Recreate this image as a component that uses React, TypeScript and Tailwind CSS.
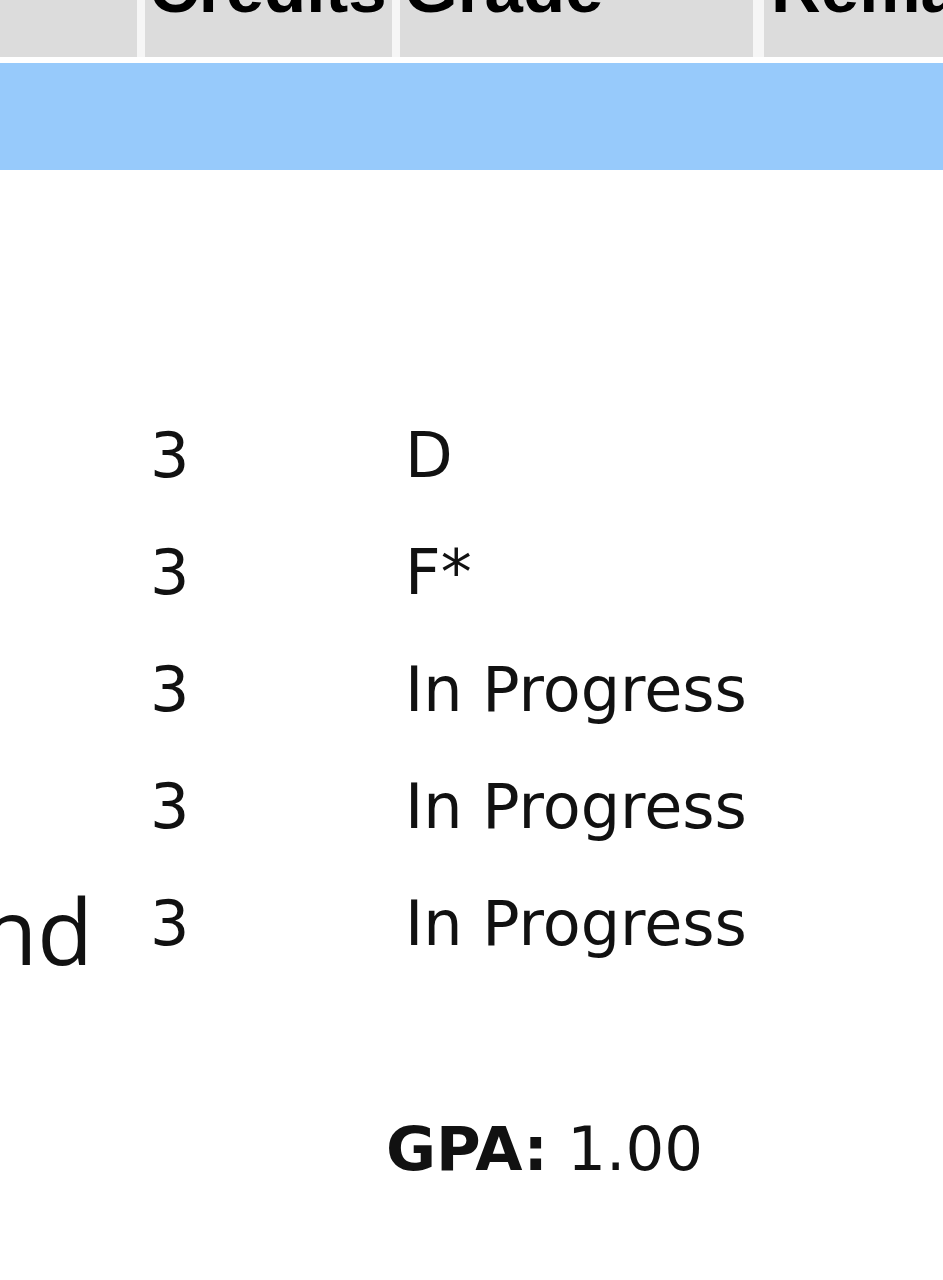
export default function App() {
  const rows = [
    { credits: "3", grade: "D" },
    { credits: "3", grade: "F*" },
    { credits: "3", grade: "In Progress" },
    { credits: "3", grade: "In Progress" },
    { credits: "3", grade: "In Progress", title: "nd" },
  ];
  return (
    <div className="h-[1280px] w-[943px] overflow-hidden bg-white text-[#111]">
      <div className="-mt-[46px]">
        <div className="flex h-[103px] gap-x-[8px] bg-[#f6f6f6] font-['Liberation_Sans',Arial,sans-serif] text-[69px] font-bold leading-none text-black">
          <div className="w-[137px] shrink-0 bg-[#dcdcdc]" />
          <div className="w-[247px] shrink-0 bg-[#dcdcdc] pl-[4px]">Credits</div>
          <div className="w-[353px] shrink-0 bg-[#dcdcdc] pl-[4px]">Grade</div>
          <div className="ml-[3px] flex-1 bg-[#dcdcdc] pl-[7px] whitespace-nowrap">Remarks</div>
        </div>
        <div className="mt-[6px] h-[107px] bg-[#97cafb]" />
        <div className="h-[227px]" />
        {rows.map((r, i) => (
          <div
            key={i}
            className="grid h-[117px] grid-cols-[137px_247px_353px_1fr] items-center gap-x-[8px] font-['DejaVu_Sans',Verdana,sans-serif] text-[62px] leading-normal"
          >
            <div className="flex h-full justify-end pr-[44px]">
              {r.title ? (
                <span className="mt-[20px] self-start whitespace-nowrap font-['Open_Sans',sans-serif] text-[91px] leading-none">
                  {r.title}
                </span>
              ) : null}
            </div>
            <div className="pl-[5px]">{r.credits}</div>
            <div className="pl-[5px] whitespace-nowrap">{r.grade}</div>
            <div />
          </div>
        ))}
        <div className="mt-[121px] pl-[386px] font-['DejaVu_Sans',Verdana,sans-serif] text-[61px] leading-normal whitespace-nowrap">
          <span className="font-bold">GPA:</span> 1.00
        </div>
      </div>
    </div>
  );
}
